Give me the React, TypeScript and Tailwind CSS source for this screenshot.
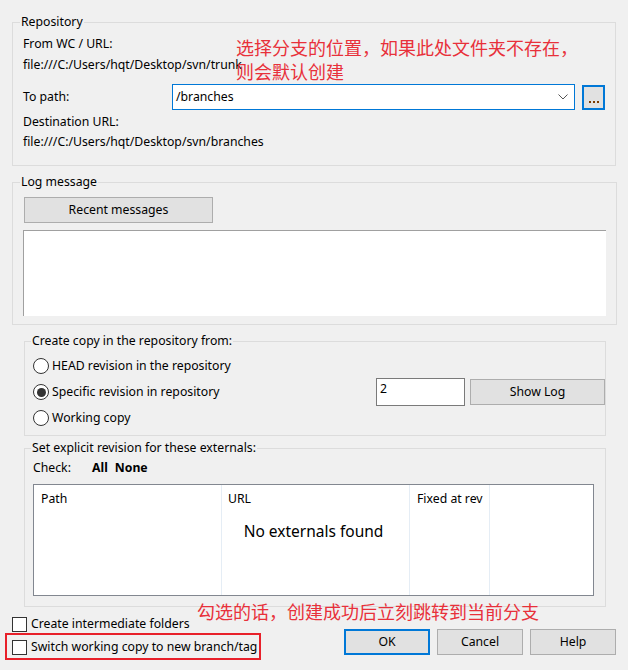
import React from 'react';

const font = { fontFamily: '"Noto Sans", "Noto Sans CJK SC", sans-serif' };

const Radio: React.FC<{ label: string; checked?: boolean }> = ({ label, checked }) => (
    <div className="flex items-center h-[26px]">
        <span className="w-[16px] h-[16px] rounded-full border border-[#333333] bg-white flex items-center justify-center">
            {checked && <span className="w-[9px] h-[9px] rounded-full bg-[#333333]" />}
        </span>
        <span className="ml-[3px]">{label}</span>
    </div>
);

const Checkbox: React.FC<{ label: string }> = ({ label }) => (
    <div className="flex items-center">
        <span className="w-[15px] h-[15px] border border-[#333333] bg-white" />
        <span className="ml-[4px]">{label}</span>
    </div>
);

const Button: React.FC<{ label: string; primary?: boolean; className?: string }> = ({ label, primary, className }) => (
    <button
        className={
            'h-[26px] bg-[#e1e1e1] text-black flex items-center justify-center ' +
            (primary ? 'border-2 border-[#0078d7] ' : 'border border-[#adadad] ') +
            (className || '')
        }
    >
        {label}
    </button>
);

export default function App() {
    return (
        <div className="relative w-[628px] h-[670px] bg-[#f0f0f0] text-[12.25px] leading-[16px] text-black overflow-hidden" style={font}>
            <div className="pt-[14px]">
                {/* Repository */}
                <fieldset className="ml-[12px] w-[604px] border border-[#dcdcdc]">
                    <legend className="ml-[7px] px-[1px]">Repository</legend>
                    <div className="pl-[10px] pr-[10px] pb-[15px]">
                        <div className="pt-[6px] h-[22px]">From WC / URL:</div>
                        <div className="mt-[5px] h-[16px]">file:///C:/Users/hqt/Desktop/svn/trunk</div>
                        <div className="mt-[11px] flex items-center h-[26px]">
                            <span className="w-[149px]">To path:</span>
                            <div className="w-[403px] h-[26px] bg-white border border-[#0078d7] flex items-center justify-between pl-[3px] pr-[6px]">
                                <span>/branches</span>
                                <svg width="10" height="6" viewBox="0 0 10 6" fill="none">
                                    <path d="M0.5 0.5 L5 5 L9.5 0.5" stroke="#555" strokeWidth="1" />
                                </svg>
                            </div>
                            <button className="ml-[7px] w-[23px] h-[25px] bg-[#e1e1e1] border-2 border-[#0078d7] flex items-end justify-center pb-[5px]">
                                <span className="flex gap-[2px]">
                                    <span className="w-[2px] h-[2px] bg-[#7a3a00]" />
                                    <span className="w-[2px] h-[2px] bg-[#7a3a00]" />
                                    <span className="w-[2px] h-[2px] bg-[#7a3a00]" />
                                </span>
                            </button>
                        </div>
                        <div className="mt-[4px] h-[16px]">Destination URL:</div>
                        <div className="mt-[4px] h-[16px]">file:///C:/Users/hqt/Desktop/svn/branches</div>
                    </div>
                </fieldset>

                {/* Log message */}
                <fieldset className="mt-[8px] ml-[12px] w-[604px] border border-[#dcdcdc]">
                    <legend className="ml-[7px] px-[1px]">Log message</legend>
                    <div className="pl-[10px] pr-[10px] pb-[8px]">
                        <Button label="Recent messages" className="mt-[7px] ml-[1px] w-[189px]" />
                        <div className="mt-[7px] w-[583px] h-[86px] bg-white border-t border-l border-[#a0a0a0]" />
                    </div>
                </fieldset>

                {/* Create copy */}
                <fieldset className="mt-[8px] ml-[24px] w-[582px] border border-[#dcdcdc]">
                    <legend className="ml-[6px] px-[1px]">Create copy in the repository from:</legend>
                    <div className="pl-[8px] pb-[4px] mt-[4px] flex items-center">
                        <div className="flex flex-col w-[343px]">
                            <Radio label="HEAD revision in the repository" />
                            <Radio label="Specific revision in repository" checked />
                            <Radio label="Working copy" />
                        </div>
                        <div className="w-[89px] h-[28px] bg-white border border-[#7a7a7a] pl-[3px] pt-[2px]">2</div>
                        <Button label="Show Log" className="ml-[5px] w-[135px]" />
                    </div>
                </fieldset>

                {/* Externals */}
                <fieldset className="mt-[4px] ml-[24px] w-[582px] border border-[#dcdcdc]">
                    <legend className="ml-[6px] px-[1px]">Set explicit revision for these externals:</legend>
                    <div className="pl-[8px] pb-[10px]">
                        <div className="mt-[4px] h-[16px] flex">
                            <span className="w-[59px]">Check:</span>
                            <span className="font-bold">All</span>
                            <span className="font-bold ml-[7px]">None</span>
                        </div>
                        <div className="relative mt-[8px] w-[561px] h-[112px] bg-white border border-[#828790] flex">
                            <div className="w-[188px] border-r border-[#e5edf5]">
                                <div className="h-[26px] pl-[7px] pt-[6px]">Path</div>
                            </div>
                            <div className="w-[188px] border-r border-[#e5edf5]">
                                <div className="h-[26px] pl-[6px] pt-[6px]">URL</div>
                            </div>
                            <div className="w-[80px] border-r border-[#e5edf5]">
                                <div className="h-[26px] pl-[7px] pt-[6px]">Fixed at rev</div>
                            </div>
                            <div className="absolute left-0 right-0 top-[36px] text-center text-[15.5px] leading-[20px]">No externals found</div>
                        </div>
                    </div>
                </fieldset>

                {/* Bottom */}
                <div className="flex justify-between items-start">
                    <div className="ml-[5px] mt-[9px] flex flex-col">
                        <div className="pl-[7px] h-[16px] flex items-center">
                            <Checkbox label="Create intermediate folders" />
                        </div>
                        <div className="mt-[1px] w-[256px] h-[27px] border-2 border-[#e8202a] pl-[5px] pt-[1px] flex items-center">
                            <Checkbox label="Switch working copy to new branch/tag" />
                        </div>
                    </div>
                    <div className="mt-[22px] mr-[12px] flex gap-[7px]">
                        <Button label="OK" primary className="w-[86px]" />
                        <Button label="Cancel" className="w-[86px]" />
                        <Button label="Help" className="w-[86px]" />
                    </div>
                </div>
            </div>

            {/* Annotations */}
            <div className="absolute left-[236px] top-[36px] text-[18px] leading-[24px] text-[#e8303a]">
                <div>选择分支的位置，如果此处文件夹不存在，</div>
                <div>则会默认创建</div>
            </div>
            <div className="absolute left-[197px] top-[600px] text-[18px] leading-[24px] text-[#e8303a]">
                勾选的话，创建成功后立刻跳转到当前分支
            </div>
        </div>
    );
}
